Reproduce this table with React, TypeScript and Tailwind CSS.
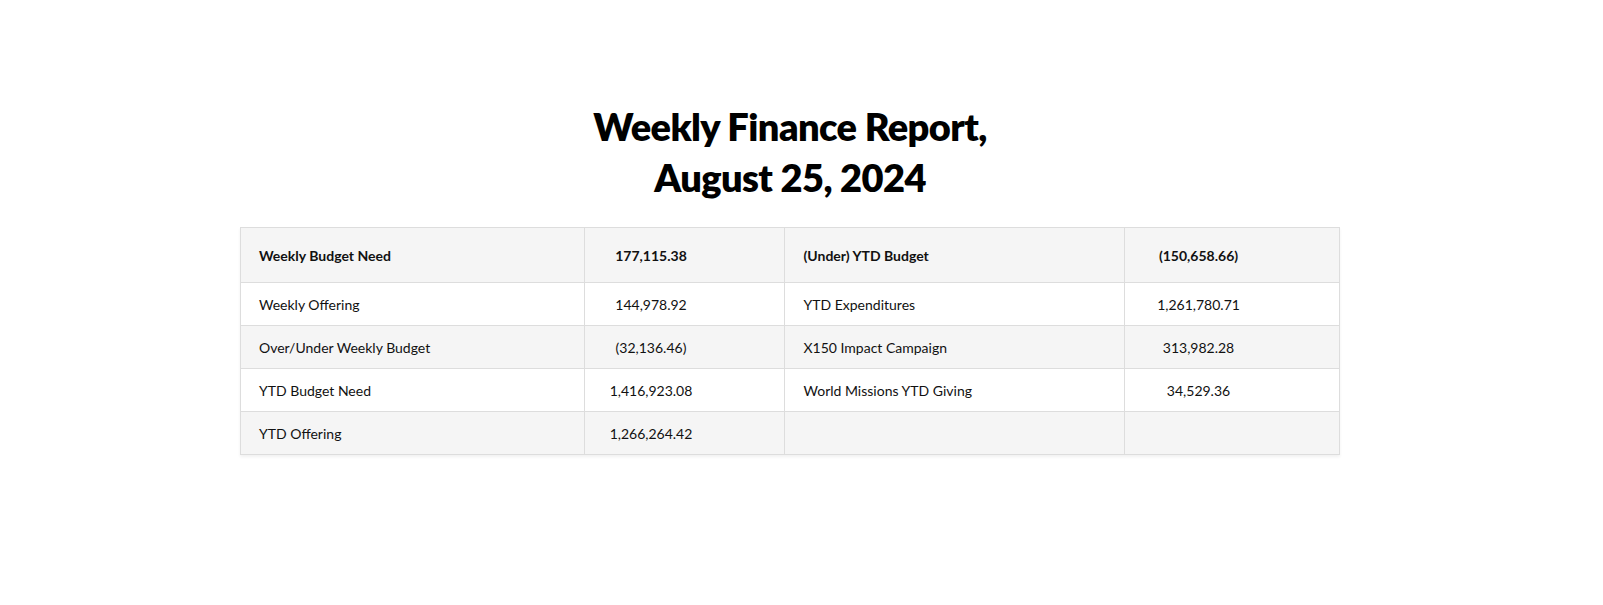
const rows = [
  { a: "Weekly Offering", b: "144,978.92", c: "YTD Expenditures", d: "1,261,780.71" },
  { a: "Over/Under Weekly Budget", b: "(32,136.46)", c: "X150 Impact Campaign", d: "313,982.28" },
  { a: "YTD Budget Need", b: "1,416,923.08", c: "World Missions YTD Giving", d: "34,529.36" },
  { a: "YTD Offering", b: "1,266,264.42", c: "", d: "" },
];

export default function App() {
  return (
    <div className="min-h-screen bg-white font-['Lato',sans-serif] text-[#111]">
      <div className="w-[1100px] ml-[240px] pt-[101px]">
        <h1 className="text-center text-[38px] leading-[51px] font-extrabold text-black tracking-[-0.6px]">
          Weekly Finance Report,
          <br />
          August 25, 2024
        </h1>

        <table className="mt-[24px] w-full border-collapse text-[14px] shadow-[0_2px_3px_rgba(0,0,0,0.06)]">
          <colgroup>
            <col className="w-[344px]" />
            <col className="w-[201px]" />
            <col className="w-[340px]" />
            <col className="w-[215px]" />
          </colgroup>
          <tbody>
            <tr className="h-[55px] bg-[#f5f5f5] font-bold">
              <td className="border border-[#dddddd] pl-[18px]">Weekly Budget Need</td>
              <td className="border border-[#dddddd] pl-[18px] pr-[85px] text-center whitespace-nowrap">177,115.38</td>
              <td className="border border-[#dddddd] pl-[18px]">(Under) YTD Budget</td>
              <td className="border border-[#dddddd] pl-[18px] pr-[85px] text-center whitespace-nowrap">(150,658.66)</td>
            </tr>
            {rows.map((r, i) => (
              <tr key={i} className={`h-[43px] ${i % 2 === 0 ? "bg-white" : "bg-[#f5f5f5]"}`}>
                <td className="border border-[#dddddd] pl-[18px]">{r.a}</td>
                <td className="border border-[#dddddd] pl-[18px] pr-[85px] text-center whitespace-nowrap">{r.b}</td>
                <td className="border border-[#dddddd] pl-[18px]">{r.c}</td>
                <td className="border border-[#dddddd] pl-[18px] pr-[85px] text-center whitespace-nowrap">{r.d}</td>
              </tr>
            ))}
          </tbody>
        </table>
      </div>
    </div>
  );
}
